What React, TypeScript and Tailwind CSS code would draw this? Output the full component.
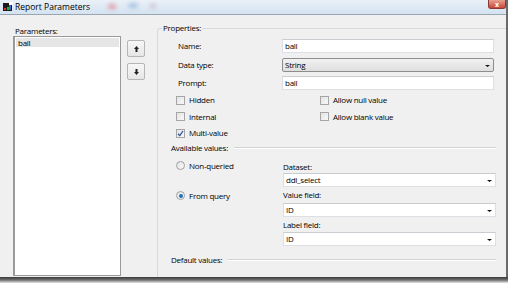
import React from "react";

function Checkbox({ checked = false }: { checked?: boolean }) {
  return (
    <div className="w-[9px] h-[9px] border border-[#a5a5a5] bg-gradient-to-br from-[#e4e4e4] to-[#f8f8f8] flex items-center justify-center shrink-0">
      {checked && (
        <svg width="7" height="7" viewBox="0 0 7 7">
          <path d="M1 3.8 L2.8 5.6 L6 1" stroke="#2a4d9a" strokeWidth="1.3" fill="none" />
        </svg>
      )}
    </div>
  );
}

function Radio({ checked = false }: { checked?: boolean }) {
  return (
    <div className="w-[9px] h-[9px] rounded-full border border-[#a0a0a0] bg-gradient-to-br from-[#e2e2e2] to-[#fafafa] flex items-center justify-center shrink-0">
      {checked && <div className="w-[4px] h-[4px] rounded-full bg-[#1f6fb8]" />}
    </div>
  );
}

function Arrow() {
  return (
    <svg width="5" height="5" viewBox="0 0 5 5">
      <path d="M0 3 L2.5 5 L5 3 Z" fill="#111" />
    </svg>
  );
}

function TextInput({ value }: { value: string }) {
  return (
    <div className="h-[14px] bg-white border border-[#dcdfe3] border-t-[#c9ccd1] flex items-center pl-[2px] leading-none">
      {value}
    </div>
  );
}

function Combo({ value, gray = false }: { value: string; gray?: boolean }) {
  return (
    <div
      className={
        gray
          ? "h-[14px] border border-[#8d8d8d] rounded-[2px] bg-gradient-to-b from-[#f2f2f2] to-[#dedede] flex items-center justify-between pl-[2px] pr-[3px] leading-none"
          : "h-[14px] bg-white border border-[#dcdfe3] border-t-[#c9ccd1] flex items-center justify-between pl-[2px] pr-[3px] leading-none"
      }
    >
      <span>{value}</span>
      <Arrow />
    </div>
  );
}

function Sep() {
  return <div className="flex-1 border-t border-[#d3d3d3] border-b border-b-white" />;
}

export default function App() {
  return (
    <div className="w-[512px] h-[283px] bg-white overflow-hidden text-[8px] text-black font-['Open_Sans',sans-serif] tracking-[-0.25px]">
      <div className="w-[508px] h-[277px] flex flex-col border-r-2 border-[#6a6a6a]">
        {/* Title bar */}
        <div className="relative h-[15px] shrink-0 bg-gradient-to-b from-[#eaf1f8] to-[#d4e2f0] border-b border-[#9aa6b2] flex items-center pl-[3px]">
          <svg width="10" height="10" viewBox="0 0 10 10" className="shrink-0">
            <rect x="0" y="1" width="9" height="8" fill="#1a1a1a" />
            <rect x="1" y="6" width="2" height="2" fill="#d33" />
            <rect x="4" y="5" width="2" height="3" fill="#3a3" />
            <rect x="6" y="3" width="2" height="5" fill="#36c" />
            <rect x="6" y="0" width="4" height="3" fill="#fff" />
          </svg>
          <span className="ml-[2px] text-[8.5px] tracking-[0px]">Report Parameters</span>
          <div className="absolute left-[108px] top-[4px] w-[8px] h-[5px] rounded-full bg-[#e27d87] blur-[2px] opacity-70" />
          <div className="absolute left-[128px] top-[3px] w-[10px] h-[5px] rounded-full bg-[#8fb4dc] blur-[2px] opacity-70" />
          <div className="absolute left-[150px] top-[4px] w-[6px] h-[4px] rounded-full bg-[#c8a0b8] blur-[2px] opacity-70" />
          <div className="absolute right-[0px] top-0 w-[18px] h-[9px] rounded-b-[3px] bg-gradient-to-b from-[#e8a090] to-[#c8463a] border border-[#8a3a30] border-t-0 flex items-center justify-center text-white text-[7px] font-bold leading-none">
            x
          </div>
        </div>

        {/* Body */}
        <div className="flex-1 bg-[#f0f0f0] flex">
          {/* Left: parameters list */}
          <div className="w-[121px] pl-[13px] pt-[10px] pb-[1px] flex flex-col shrink-0">
            <div className="h-[11px] leading-[11px] pl-[2px]">Parameters:</div>
            <div className="flex-1 bg-white border border-[#9a9a9a] border-l-2 p-[1px]">
              <div className="h-[9px] leading-[9px] bg-[#e6e6e6] pl-[2px]">ball</div>
            </div>
          </div>

          {/* Move buttons */}
          <div className="ml-[6px] pt-[25px] flex flex-col gap-[6px] shrink-0">
            <div className="w-[18px] h-[17px] border border-[#b5b5b5] rounded-[2px] bg-gradient-to-b from-[#f7f7f7] to-[#e6e6e6] flex items-center justify-center">
              <svg width="5" height="6" viewBox="0 0 5 6">
                <path d="M2.5 0 L5 3 L3.5 3 L3.5 6 L1.5 6 L1.5 3 L0 3 Z" fill="#222" />
              </svg>
            </div>
            <div className="w-[18px] h-[17px] border border-[#b5b5b5] rounded-[2px] bg-gradient-to-b from-[#f7f7f7] to-[#e6e6e6] flex items-center justify-center">
              <svg width="5" height="6" viewBox="0 0 5 6">
                <path d="M2.5 6 L5 3 L3.5 3 L3.5 0 L1.5 0 L1.5 3 L0 3 Z" fill="#222" />
              </svg>
            </div>
          </div>

          {/* Right: properties */}
          <div className="flex-1 ml-[12px] pt-[8px] flex flex-col">
            <fieldset className="flex-1 border-l border-t border-[#d6d9dc] rounded-tl-[3px] flex flex-col">
              <legend className="ml-[4px] px-[1px] leading-[10px]">Properties:</legend>

              {/* name/type/prompt grid */}
              <div className="mt-[6px] grid grid-cols-[104px_212px] gap-y-[4.5px] items-center pl-[20px]">
                <div>Name:</div>
                <TextInput value="ball" />
                <div>Data type:</div>
                <Combo value="String" gray />
                <div>Prompt:</div>
                <TextInput value="ball" />
              </div>

              {/* checkboxes */}
              <div className="mt-[2px] pl-[18px] grid grid-cols-[144px_1fr] auto-rows-[16.5px] items-center">
                <div className="flex items-center gap-[4px]"><Checkbox /> <span>Hidden</span></div>
                <div className="flex items-center gap-[4px]"><Checkbox /> <span>Allow null value</span></div>
                <div className="flex items-center gap-[4px]"><Checkbox /> <span>Internal</span></div>
                <div className="flex items-center gap-[4px]"><Checkbox /> <span>Allow blank value</span></div>
                <div className="flex items-center gap-[4px]"><Checkbox checked /> <span>Multi-value</span></div>
              </div>

              {/* Available values */}
              <div className="mt-[1px] h-[10px] flex items-center pl-[13px] pr-[10px]">
                <span className="mr-[6px]">Available values:</span>
                <Sep />
              </div>

              <div className="flex pl-[18px] pr-[10px]">
                <div className="w-[107px] flex flex-col">
                  <div className="mt-[8px] h-[10px] flex items-center gap-[4px]"><Radio /> <span>Non-queried</span></div>
                  <div className="mt-[20px] h-[10px] flex items-center gap-[4px]"><Radio checked /> <span>From query</span></div>
                </div>
                <div className="flex-1 flex flex-col">
                  <div className="mt-[9px] h-[10px] leading-[10px]">Dataset:</div>
                  <div className="mt-[1px]"><Combo value="ddl_select" /></div>
                  <div className="mt-[3px] h-[10px] leading-[10px]">Value field:</div>
                  <div className="mt-[3px]"><Combo value="ID" /></div>
                  <div className="mt-[3px] h-[10px] leading-[10px]">Label field:</div>
                  <div className="mt-[2px]"><Combo value="ID" /></div>
                </div>
              </div>

              <div className="mt-[9px] h-[10px] flex items-center pl-[13px] pr-[10px]">
                <span className="mr-[6px]">Default values:</span>
                <Sep />
              </div>
            </fieldset>
          </div>
        </div>
      </div>
      <div className="w-[508px] h-[6px] bg-gradient-to-b from-[#3a3a3a] via-[#707070] to-[#e8e8e8]" />
    </div>
  );
}
